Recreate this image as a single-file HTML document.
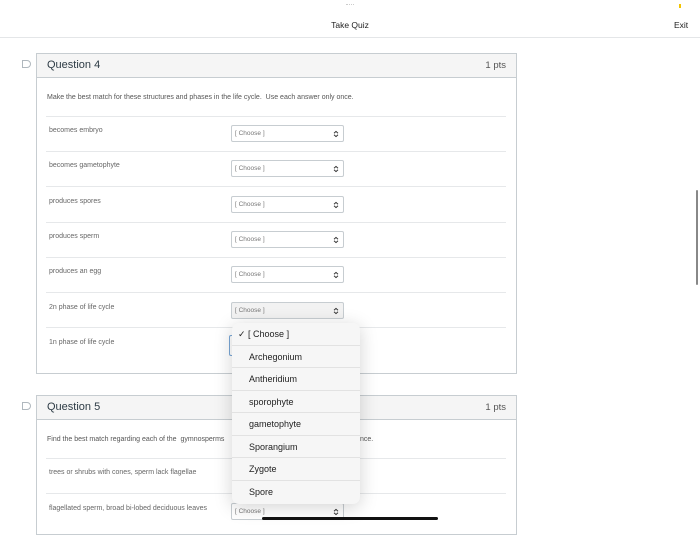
<!DOCTYPE html>
<html><head><style>
*{margin:0;padding:0;box-sizing:border-box}
body{width:700px;height:525px;overflow:hidden;background:#fff;font-family:"Liberation Sans",sans-serif;position:relative;color:#2d3b45}
.a{position:absolute}
.hdr{left:0;top:0;width:700px;height:38px;border-bottom:1px solid #e4e6e8}
.box{left:36px;width:481px;border:1px solid #c7cdd1;background:#fff}
.qh{background:#f5f5f5;border-bottom:1px solid #c7cdd1;height:24px;font-size:11px;padding:5px 10px;color:#2d3b45}
.qh span{float:right;font-size:9.5px;color:#555;margin-top:1px}
.lbl{font-size:7px;color:#666;left:49px}
.sep{left:46px;width:460px;height:1px;background:#e6e8ea}
.sel{left:231px;width:113px;height:17px;border:1px solid #c7cdd1;border-radius:2px;font-size:6.5px;color:#777;padding:0 3px;line-height:15px;background:#fff}
.sel svg{position:absolute;right:3px;top:4px}
.bm{left:22px;width:9px;height:8px;border:1px solid #b0b8be;border-radius:0 4px 4px 0}
.dd{left:232px;top:323px;width:128px;height:181px;background:#f6f6f6;border-radius:7px;box-shadow:0 3px 18px rgba(0,0,0,.18);overflow:hidden}
.it{height:22.5px;border-bottom:1px solid #e2e2e2;font-size:9px;color:#222;padding:6px 0 0 17px}
.it:last-child{border-bottom:none}
</style></head><body>
<div class="a" style="left:346px;top:4px;width:8px;height:1px;border-top:1px dotted #ccc"></div>
<div class="a" style="left:679px;top:4px;width:2px;height:4px;background:#f3c400"></div>
<div class="a hdr"></div>
<div class="a" style="left:0;width:700px;top:20px;text-align:center;font-size:8.5px;color:#222">Take Quiz</div>
<div class="a" style="left:674px;top:20px;font-size:8.5px;color:#222">Exit</div>
<div class="a" style="left:696px;top:190px;width:2px;height:95px;background:#888;border-radius:1px"></div>

<div class="a bm" style="top:60px"></div>
<div class="a box" style="top:53px;height:321px">
<div class="qh">Question 4<span>1 pts</span></div>
</div>
<div class="a" style="left:47px;top:94px;font-size:7px;color:#555">Make the best match for these structures and phases in the life cycle.&nbsp; Use each answer only once.</div>

<div class="a sep" style="top:116px"></div>
<div class="a lbl" style="top:127px">becomes embryo</div>
<div class="a sel" style="top:125px">[ Choose ]<svg width="8" height="8" viewBox="0 0 8 8"><path d="M2 3.2L4 1.4 6 3.2M2 4.8L4 6.6 6 4.8" fill="none" stroke="#333" stroke-width="1"/></svg></div>
<div class="a sep" style="top:151px"></div>
<div class="a lbl" style="top:162px">becomes gametophyte</div>
<div class="a sel" style="top:160px">[ Choose ]<svg width="8" height="8" viewBox="0 0 8 8"><path d="M2 3.2L4 1.4 6 3.2M2 4.8L4 6.6 6 4.8" fill="none" stroke="#333" stroke-width="1"/></svg></div>
<div class="a sep" style="top:186px"></div>
<div class="a lbl" style="top:198px">produces spores</div>
<div class="a sel" style="top:196px">[ Choose ]<svg width="8" height="8" viewBox="0 0 8 8"><path d="M2 3.2L4 1.4 6 3.2M2 4.8L4 6.6 6 4.8" fill="none" stroke="#333" stroke-width="1"/></svg></div>
<div class="a sep" style="top:222px"></div>
<div class="a lbl" style="top:233px">produces sperm</div>
<div class="a sel" style="top:231px">[ Choose ]<svg width="8" height="8" viewBox="0 0 8 8"><path d="M2 3.2L4 1.4 6 3.2M2 4.8L4 6.6 6 4.8" fill="none" stroke="#333" stroke-width="1"/></svg></div>
<div class="a sep" style="top:257px"></div>
<div class="a lbl" style="top:268px">produces an egg</div>
<div class="a sel" style="top:266px">[ Choose ]<svg width="8" height="8" viewBox="0 0 8 8"><path d="M2 3.2L4 1.4 6 3.2M2 4.8L4 6.6 6 4.8" fill="none" stroke="#333" stroke-width="1"/></svg></div>
<div class="a sep" style="top:292px"></div>
<div class="a lbl" style="top:304px">2n phase of life cycle</div>
<div class="a sel" style="top:302px;background:#f2f2f2">[ Choose ]<svg width="8" height="8" viewBox="0 0 8 8"><path d="M2 3.2L4 1.4 6 3.2M2 4.8L4 6.6 6 4.8" fill="none" stroke="#333" stroke-width="1"/></svg></div>
<div class="a sep" style="top:327px"></div>
<div class="a lbl" style="top:339px">1n phase of life cycle</div>
<div class="a" style="left:229px;top:335px;width:3px;height:21px;border:1px solid #7aa7d6;border-right:none;border-radius:2px 0 0 2px"></div>

<div class="a bm" style="top:402px"></div>
<div class="a box" style="top:395px;height:140px">
<div class="qh">Question 5<span>1 pts</span></div>
</div>
<div class="a" style="left:47px;top:436px;font-size:7px;color:#555">Find the best match regarding each of the&nbsp; gymnosperms</div>
<div class="a" style="left:360px;top:436px;font-size:7px;color:#555;background:#fff;width:20px">nce.</div>
<div class="a sep" style="top:458px"></div>
<div class="a lbl" style="top:469px">trees or shrubs with cones, sperm lack flagellae</div>
<div class="a sep" style="top:493px"></div>
<div class="a lbl" style="top:505px">flagellated sperm, broad bi-lobed deciduous leaves</div>
<div class="a sel" style="top:503px">[ Choose ]<svg width="8" height="8" viewBox="0 0 8 8"><path d="M2 3.2L4 1.4 6 3.2M2 4.8L4 6.6 6 4.8" fill="none" stroke="#333" stroke-width="1"/></svg></div>

<div class="a dd">
<div class="it" style="padding-left:6px">✓ [ Choose ]</div>
<div class="it">Archegonium</div>
<div class="it">Antheridium</div>
<div class="it">sporophyte</div>
<div class="it">gametophyte</div>
<div class="it">Sporangium</div>
<div class="it">Zygote</div>
<div class="it">Spore</div>
</div>
<div class="a" style="left:262px;top:517px;width:176px;height:3px;background:#111;border-radius:2px"></div>
</body></html>
